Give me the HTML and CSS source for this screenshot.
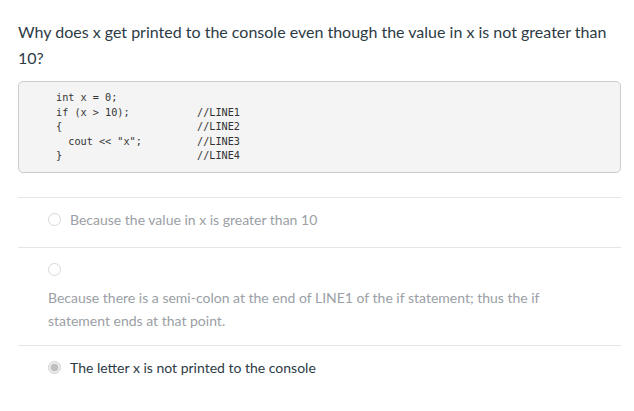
FILE: index.html
```html
<!DOCTYPE html>
<html>
<head>
<meta charset="utf-8">
<link rel="stylesheet" href="styles.css">
</head>
<body>
<div class="quiz">
  <p class="question">Why does x get printed to the console even though the value in x is not greater than 10?</p>
  <pre class="code">int x = 0;
if (x &gt; 10);           //LINE1
{                      //LINE2
  cout &lt;&lt; "x";         //LINE3
}                      //LINE4</pre>
  <div class="answers">
    <div class="answer">
      <div class="row"><span class="radio"></span><span class="label muted">Because the value in x is greater than 10</span></div>
    </div>
    <div class="answer">
      <div class="row"><span class="radio"></span></div>
      <p class="block-label muted">Because there is a semi-colon at the end of LINE1 of the if statement; thus the if statement ends at that point.</p>
    </div>
    <div class="answer">
      <div class="row"><span class="radio checked"></span><span class="label">The letter x is not printed to the console</span></div>
    </div>
  </div>
</div>
</body>
</html>
```
FILE: styles.css
```css
html, body {
  margin: 0;
  padding: 0;
  background: #ffffff;
}
body {
  font-family: Lato, "Open Sans", sans-serif;
  color: #2d3b45;
}
.quiz {
  width: 603px;
  padding: 19px 0 0 18px;
}
.question {
  margin: 0;
  font-size: 16px;
  line-height: 25.6px;
  color: #2d3b45;
}
.code {
  margin: 11px 0 0 0;
  background: #f4f4f4;
  border: 1px solid #c9cdd1;
  border-radius: 5px;
  padding: 9px 10px 8px 37px;
  font-family: "DejaVu Sans Mono", monospace;
  font-size: 10.2px;
  line-height: 14.5px;
  color: #333333;
}
.answers {
  margin-top: 24px;
}
.answer {
  border-top: 1px solid #e3e5e6;
  padding: 11px 0 16px 30px;
}
.answer:nth-child(2) {
  padding-bottom: 13px;
}
.row {
  display: flex;
  align-items: center;
  height: 22px;
}
.radio {
  box-sizing: border-box;
  width: 13px;
  height: 13px;
  border-radius: 50%;
  border: 1px solid #d6d8da;
  background: #ffffff;
  flex: none;
}
.radio.checked {
  border: 1px solid #cfd1d3;
  background: radial-gradient(circle, #bdbfc1 0, #bdbfc1 3.5px, #eeeeee 4.2px);
}
.label {
  margin-left: 9px;
  font-size: 14px;
  line-height: 22px;
}
.muted {
  color: #9aa0a5;
}
.block-label {
  margin: 5px 0 0 0;
  font-size: 14px;
  line-height: 23px;
  width: 520px;
}
```
